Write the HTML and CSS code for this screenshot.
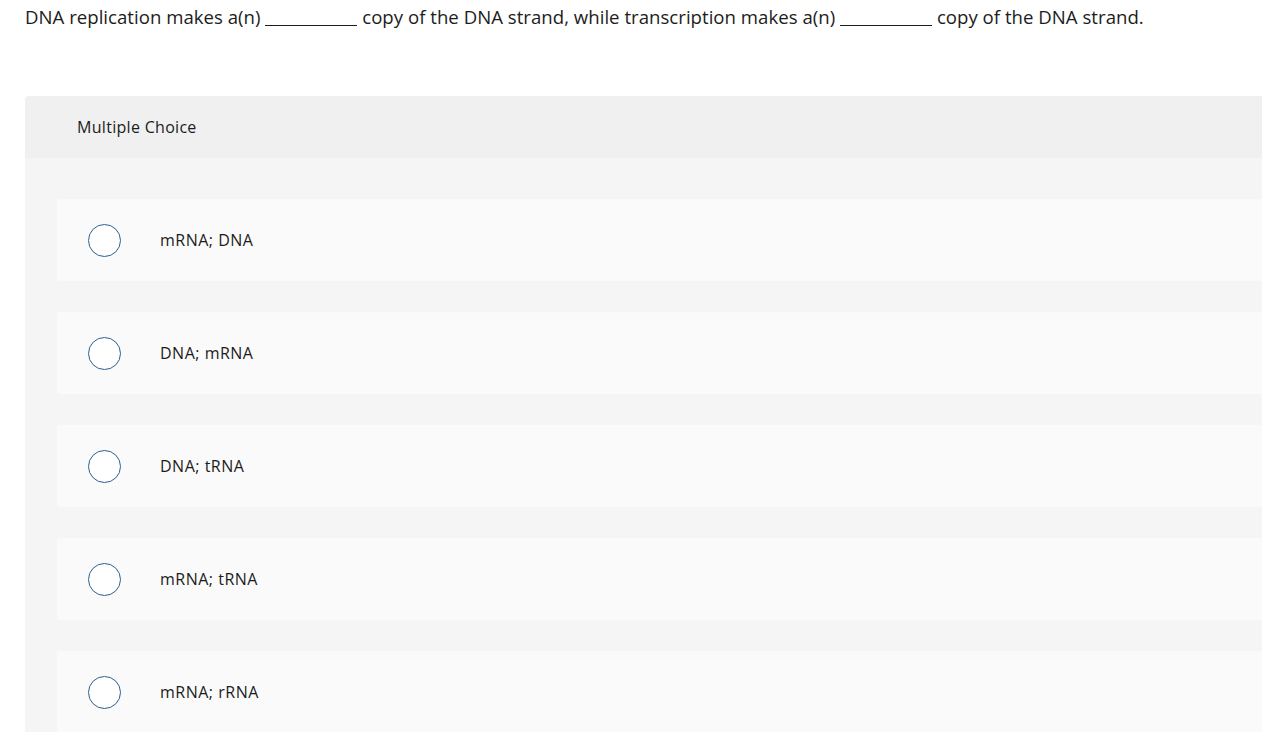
FILE: index.html
```html
<!DOCTYPE html>
<html>
<head>
<meta charset="utf-8">
<link rel="stylesheet" href="styles.css">
</head>
<body>
<div class="page">
  <p class="question">DNA replication makes a(n) <span class="blank"></span> copy of the DNA strand, while transcription makes a(n) <span class="blank"></span> copy of the DNA strand.</p>
  <section class="panel">
    <header class="panel-head">Multiple Choice</header>
    <div class="options">
      <label class="option"><span class="radio"></span><span class="opt-text">mRNA; DNA</span></label>
      <label class="option"><span class="radio"></span><span class="opt-text">DNA; mRNA</span></label>
      <label class="option"><span class="radio"></span><span class="opt-text">DNA; tRNA</span></label>
      <label class="option"><span class="radio"></span><span class="opt-text">mRNA; tRNA</span></label>
      <label class="option"><span class="radio"></span><span class="opt-text">mRNA; rRNA</span></label>
    </div>
  </section>
</div>
</body>
</html>
```

FILE: styles.css
```css
html, body {
  margin: 0;
  padding: 0;
  background: #ffffff;
  overflow: hidden;
}
.page {
  height: 747px;
  padding-left: 25px;
  font-family: "Open Sans", "Liberation Sans", sans-serif;
  color: #1c1c1c;
}
.question {
  margin: 0;
  padding-top: 5px;
  font-size: 18.6px;
  letter-spacing: 0.02px;
  line-height: 24px;
  height: 91px;
  white-space: nowrap;
}
.blank {
  display: inline-block;
  width: 92px;
  border-bottom: 1px solid #1c1c1c;
  height: 18px;
  vertical-align: -2px;
}
.panel {
  background: #f5f5f5;
  border-top-left-radius: 4px;
  height: 636px;
  overflow: hidden;
}
.panel-head {
  background: #f0f0f0;
  height: 62px;
  display: flex;
  align-items: center;
  padding-left: 52px;
  font-size: 16px;
  letter-spacing: 0.3px;
  border-top-left-radius: 4px;
}
.options {
  padding: 41px 0 0 32px;
  display: flex;
  flex-direction: column;
  gap: 31px;
}
.option {
  background: #fafafa;
  border-radius: 3px 0 0 3px;
  height: 82px;
  display: flex;
  align-items: center;
  padding-left: 31px;
  flex-shrink: 0;
}
.radio {
  width: 31px;
  height: 31px;
  border: 1.5px solid #2b5f92;
  border-radius: 50%;
  background: #ffffff;
  flex-shrink: 0;
}
.opt-text {
  margin-left: 39px;
  font-size: 16px;
  letter-spacing: 0.5px;
  line-height: 20px;
  padding-bottom: 1px;
}
```
